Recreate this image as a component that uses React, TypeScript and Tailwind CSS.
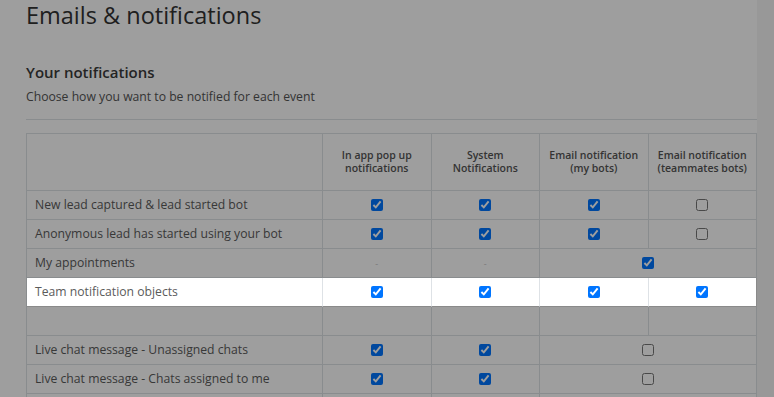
import React from 'react';

type Cell = boolean | null | 'dash';

type Row = {
  label: string;
  cells: Cell[];
  merged?: boolean;
  highlight?: boolean;
};

const rows: Row[] = [
  { label: 'New lead captured & lead started bot', cells: [true, true, true, false] },
  { label: 'Anonymous lead has started using your bot', cells: [true, true, true, false] },
  { label: 'My appointments', cells: ['dash', 'dash', true], merged: true },
  { label: 'Team notification objects', cells: [true, true, true, true], highlight: true },
  { label: '', cells: [null, null, null, null] },
  { label: 'Live chat message - Unassigned chats', cells: [true, true, false], merged: true },
  { label: 'Live chat message - Chats assigned to me', cells: [true, true, false], merged: true },
  { label: '', cells: [null, null, null], merged: true },
];

const headers = [
  ['In app pop up', 'notifications'],
  ['System', 'Notifications'],
  ['Email notification', '(my bots)'],
  ['Email notification', '(teammates bots)'],
];

function CellContent({ value }: { value: Cell }) {
  if (value === null) return null;
  if (value === 'dash') return <span className="text-[9px] text-[#c4c4c4]">-</span>;
  return (
    <input
      type="checkbox"
      defaultChecked={value}
      className="m-0 inline-block size-[12px] align-middle"
    />
  );
}

export default function App() {
  return (
    <div className="relative flex h-[397px] w-full overflow-hidden bg-[#f5f5f5] font-['Open_Sans',sans-serif]">
      <div className="w-[757px] shrink-0 bg-white pl-[26px]">
        <h1 className="text-[23.5px] leading-[30px] font-normal text-[#333]">Emails &amp; notifications</h1>

        <h2 className="mt-[31px] text-[15px] leading-[22px] font-semibold text-[#3a3a3a]">
          Your notifications
        </h2>
        <p className="mt-[5px] text-[12.2px] leading-[18px] text-[#555]">
          Choose how you want to be notified for each event
        </p>

        <div className="mt-[13px] h-px bg-[#dee2e6]" />

        <table className="mt-[13px] w-[731px] table-fixed border-separate border-spacing-0 border-t border-l border-[#dee2e6] text-[12.2px] text-[#5b5b5b]">
          <colgroup>
            <col className="w-[296px]" />
            <col />
            <col />
            <col />
            <col />
          </colgroup>
          <thead>
            <tr>
              <th className="h-[57px] border-r border-b border-[#dee2e6] p-0" />
              {headers.map((h, i) => (
                <th
                  key={i}
                  className="h-[57px] border-r border-b border-[#dee2e6] p-0 text-center text-[10.5px] leading-[13px] font-semibold text-[#555]"
                >
                  {h[0]}
                  <br />
                  {h[1]}
                </th>
              ))}
            </tr>
          </thead>
          <tbody>
            {rows.map((row, ri) => {
              const hl = row.highlight
                ? 'relative z-20 bg-white border-b-[#8a8a8a]'
                : '';
              return (
                <tr key={ri}>
                  <td
                    className={`h-[29px] border-r border-b border-[#dee2e6] p-0 pl-2 align-middle ${hl}`}
                  >
                    {row.label}
                  </td>
                  {row.cells.map((c, ci) => {
                    const span = row.merged && ci === 2 ? 2 : 1;
                    const last = ci === row.cells.length - 1;
                    return (
                      <td
                        key={ci}
                        colSpan={span}
                        className={`h-[29px] border-r border-b border-[#dee2e6] p-0 text-center align-middle leading-none ${hl} ${
                          row.highlight && last ? 'border-r-[#8a8a8a]' : ''
                        }`}
                      >
                        <CellContent value={c} />
                      </td>
                    );
                  })}
                </tr>
              );
            })}
          </tbody>
        </table>
      </div>
      <div className="flex-1" />

      {/* product tour mask, the highlighted row sits above it */}
      <div className="fixed inset-0 z-10 bg-black/[0.38]" />
    </div>
  );
}
